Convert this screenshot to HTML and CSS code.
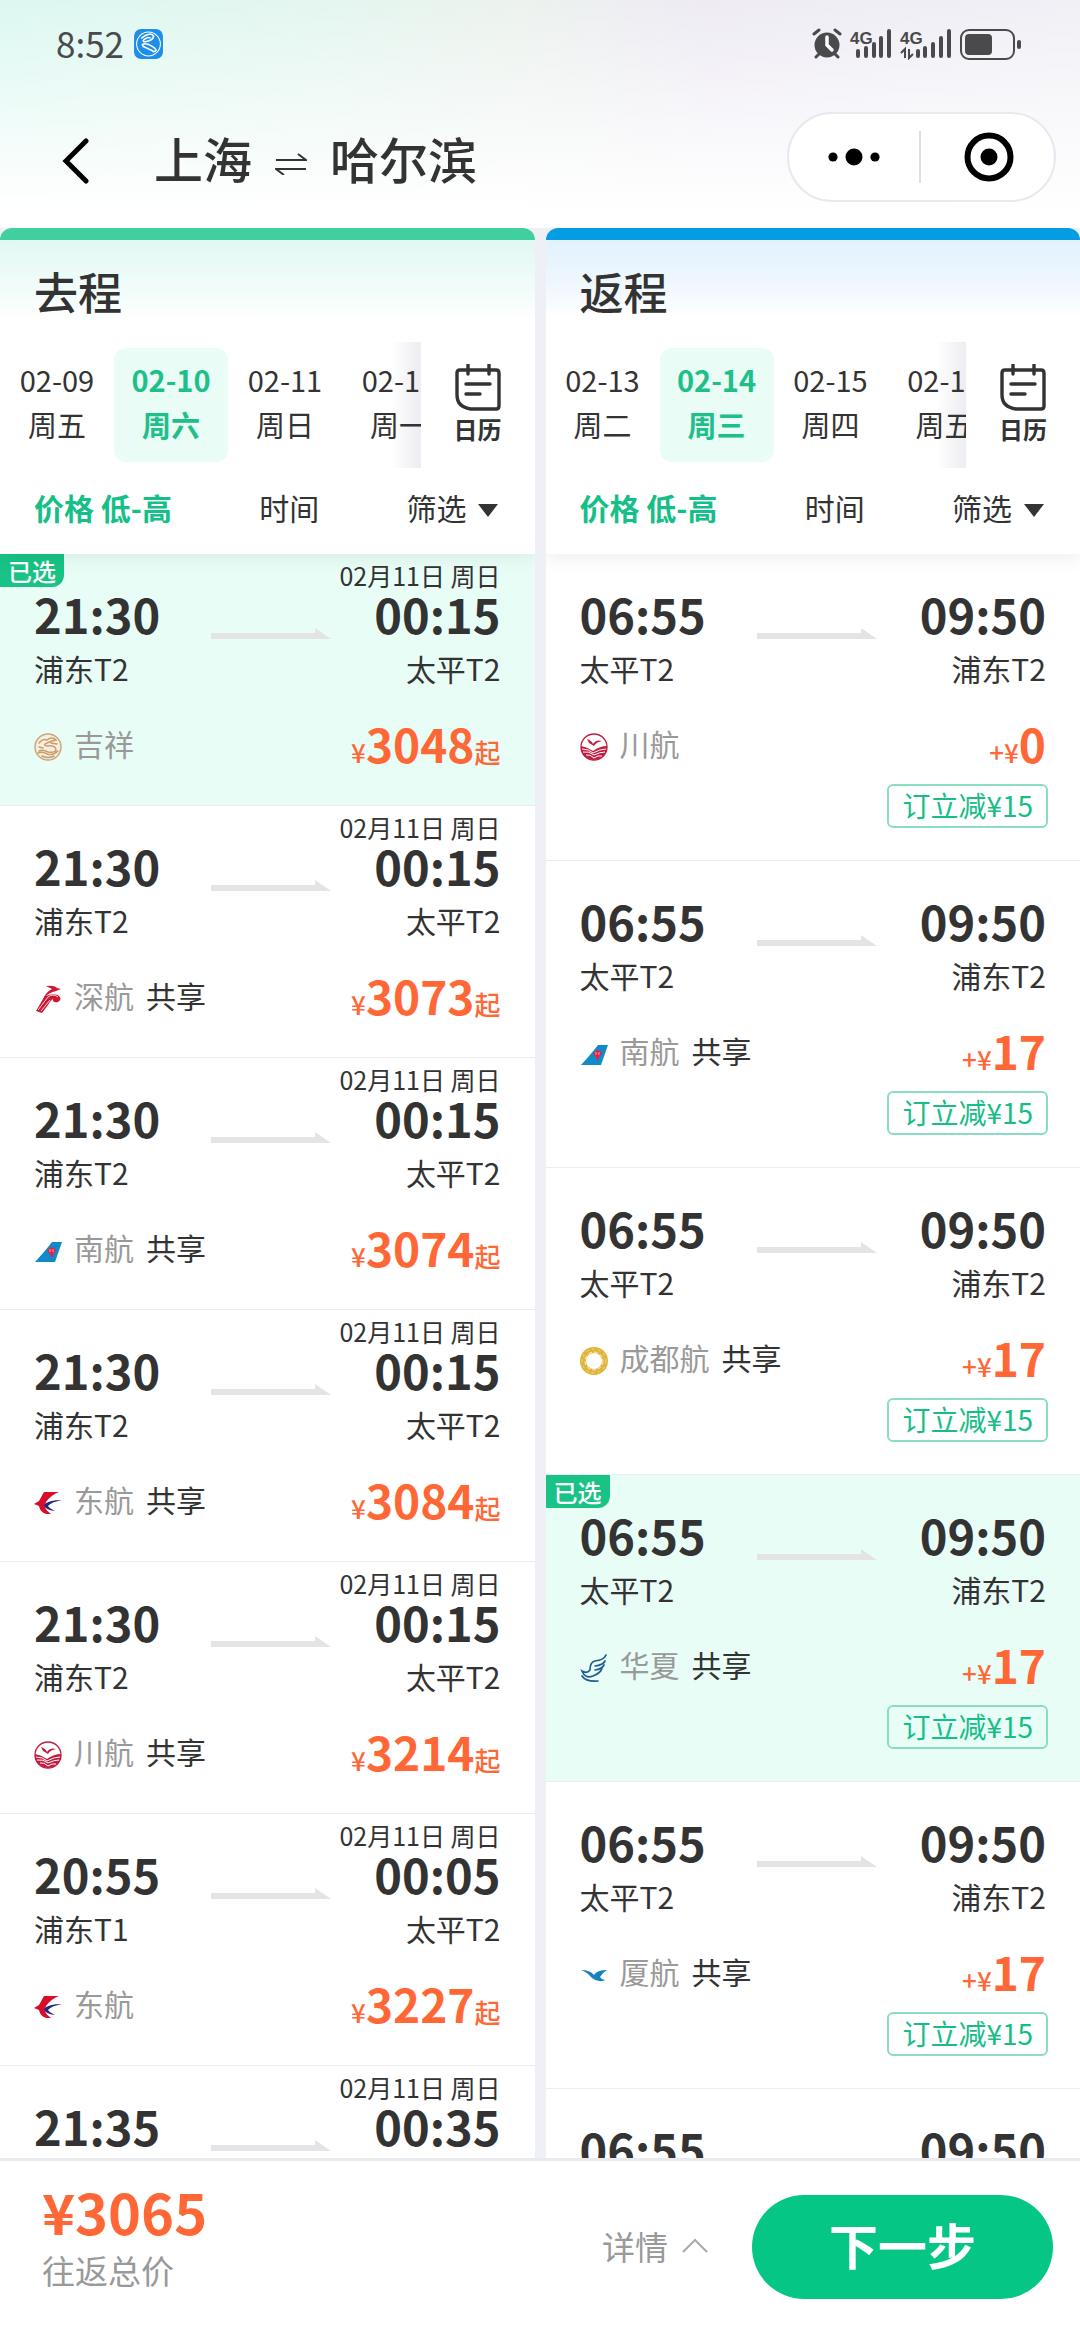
FILE: index.html
```html
<!DOCTYPE html>
<html lang="zh-CN">
<head>
    <meta charset="UTF-8">
    <meta name="viewport" content="width=device-width, initial-scale=1.0">
    <title>上海 - 哈尔滨</title>
    <link rel="stylesheet" href="styles.css">
</head>
<body>
    <!-- shared icons -->
    <svg class="sprite" width="0" height="0" aria-hidden="true">
        <symbol id="arrow" viewBox="0 0 120 11">
            <path d="M0 5H104V0L120 11H0Z" fill="#e4e4e6"/>
        </symbol>
        <symbol id="calendar" viewBox="0 0 46 48">
            <path d="M5 6H41Q44 6 44 9V42Q44 45 41 45H16Q2 43 2 31V9Q2 6 5 6ZM13 1V10M34 1V10M11 20H35M11 30H25" fill="none" stroke="#333" stroke-width="3.4" stroke-linecap="round"/>
        </symbol>
        <symbol id="juneyao" viewBox="0 0 28 28">
            <circle cx="14" cy="14" r="13" fill="#f8eee0" stroke="#c9a77c" stroke-width="1.4"/>
            <path d="M5 10Q9 5 13 7Q18 3 22 7Q17 8 13 10Q8 12 13 13Q22 12 22 17Q21 20 14 19Q9 16 5 18M4 20Q9 18 13 21Q19 23 24 18M8 23Q14 26 20 23M5 14L9 15M17 10L23 11" fill="none" stroke="#c9a06a" stroke-width="1.5" stroke-linecap="round"/>
        </symbol>
        <symbol id="shenzhen" viewBox="0 0 28 28">
            <path d="M12 1Q20 0 23 3L27 4L22 6Q15 8 12 11Q18 8 24 10Q29 14 24 17Q18 18 19 14Q17 15 14 20L8 28L2 26L9 14Q12 7 18 4Z" fill="#cf1733"/>
            <path d="M4 25L14 12Q19 8 24 12M7 26L16 15" fill="none" stroke="#fff" stroke-width=".8"/>
        </symbol>
        <symbol id="southern" viewBox="0 0 28 28">
            <path d="M1 25Q12 13 18 5H28L21 25Z" fill="#118bc7"/>
            <path d="M13 13L15 12L16 10L18 11L20 10L21 12L22 13L21 15L19 17L19 20L17 20L16 17L14 15Z" fill="#e0224c"/>
            <path d="M16 12V15M19 12V15" stroke="#fff" stroke-width=".6"/>
        </symbol>
        <symbol id="eastern" viewBox="0 0 28 28">
            <path d="M10 3H25Q17 6 12 13Q9 20 17 25H12Q6 23 5 17L0 15L5 12Z" fill="#d70e2b"/>
            <path d="M28 11Q14 11 10 16Q11 21 21 22Q15 19 14 17Q17 13 28 11Z" fill="#202a80"/>
        </symbol>
        <symbol id="sichuan" viewBox="0 0 28 28">
            <circle cx="14" cy="14" r="13" fill="#fff" stroke="#c31b3d" stroke-width="1.3"/>
            <path d="M7 6Q12 8 13 11Q16 6 22 8Q16 9 14 13Q11 11 9 10Z" fill="#c31b3d"/>
            <path d="M1 13Q7 14 13 18Q20 13 27 13V18Q23 26 14 27Q5 26 1 18Z" fill="#c31b3d"/>
            <path d="M2 16Q9 16 13 20Q20 16 26 16M3 19Q9 18 14 22Q20 19 25 19M6 22Q10 21 14 25Q18 22 22 23" fill="none" stroke="#fff" stroke-width="1"/>
        </symbol>
        <symbol id="chengdu" viewBox="0 0 28 28">
            <circle cx="14" cy="14" r="11" fill="none" stroke="#e0b33c" stroke-width="6"/>
            <circle cx="14" cy="14" r="9" fill="none" stroke="#fff3c4" stroke-width="1" stroke-dasharray="4 2"/>
            <circle cx="14" cy="14" r="12" fill="none" stroke="#f6d878" stroke-width="1" stroke-dasharray="3 3"/>
        </symbol>
        <symbol id="huaxia" viewBox="0 0 28 28">
            <path d="M26 1Q24 6 15 7Q10 8 10 16Q7 20 2 17Q5 25 13 22Q21 19 22 14M25 7Q23 11 15 12M24 11Q22 15 15 16M2 22Q6 28 18 27" fill="none" stroke="#1d5d91" stroke-width="1.7" stroke-linecap="round"/>
        </symbol>
        <symbol id="xiamen" viewBox="0 0 28 28">
            <path d="M1 9Q10 9 14 14Q17 9 27 9Q22 12 20 16Q22 19 26 19Q18 22 12 17Q7 11 1 9Z" fill="#1583bd"/>
        </symbol>
    </svg>

    <header class="top">
        <div class="status-bar">
            <span class="clock">8:52</span>
            <svg class="app-icon" viewBox="0 0 28 29">
                <rect width="28" height="29" rx="7" fill="#1d8eea"/>
                <circle cx="14" cy="14.500" r="11.500" fill="none" stroke="#fff" stroke-width="1"/>
                <path d="M7 9Q16 2 19 7Q18 11 12 12Q7 13 10 10Q14 7 16 9M8 15Q12 13 18 17Q24 21 19 22Q16 20 9 17Z" fill="none" stroke="#fff" stroke-width="1.500"/>
            </svg>
            <svg class="status-icons" viewBox="0 0 210 32">
                <g fill="#4a4a4c">
                    <circle cx="15" cy="17" r="12.500"/>
                    <path d="M2 6L7 2M28 6L23 2M7 26L4 29M23 26L26 29" stroke="#4a4a4c" stroke-width="3" stroke-linecap="round"/>
                    <path d="M15 9V17L20 22" fill="none" stroke="#fff" stroke-width="3.500" stroke-linecap="round"/>
                    <text class="net" x="38" y="16">4G</text>
                    <text class="net" x="88" y="16">4G</text>
                    <path d="M46 23V28M54 20V28M62 16V28M69 10V28M77 3V28M106 23V28M113 20V28M121 16V28M129 10V28M137 3V28" stroke="#4a4a4c" stroke-width="4" stroke-linecap="round"/>
                    <path d="M89 25L93 21V30M97 21V30L101 26" fill="none" stroke="#4a4a4c" stroke-width="2"/>
                    <rect x="149" y="2" width="53" height="29" rx="8" fill="none" stroke="#4a4a4c" stroke-width="2"/>
                    <rect x="153" y="6" width="27" height="21" rx="4"/>
                    <rect x="205" y="12" width="4" height="9" rx="2"/>
                </g>
            </svg>
        </div>
        <div class="nav-bar">
            <button class="back" aria-label="返回">
                <svg width="28" height="46" viewBox="0 0 28 46"><path d="M24 3L4 23L24 43" fill="none" stroke="#000" stroke-width="5" stroke-linecap="round"/></svg>
            </button>
            <h1 class="route-title">
                <span>上海</span>
                <svg width="32" height="22" viewBox="0 0 32 22"><path d="M1 7H31L23 1M31 16H1L9 22" fill="none" stroke="#333" stroke-width="2"/></svg>
                <span>哈尔滨</span>
            </h1>
            <div class="capsule">
                <button aria-label="更多">
                    <svg width="54" height="20" viewBox="0 0 54 20"><circle cx="6" cy="10" r="4.600"/><circle cx="27" cy="10" r="8.500"/><circle cx="48" cy="10" r="4.600"/></svg>
                </button>
                <button aria-label="关闭">
                    <svg width="50" height="50" viewBox="0 0 50 50"><circle cx="25" cy="25" r="21.500" fill="none" stroke="#000" stroke-width="6"/><circle cx="25" cy="25" r="8.500"/></svg>
                </button>
            </div>
        </div>
    </header>

    <main class="trips">
        <section class="panel panel-go">
            <div class="panel-head">
                <h2>去程</h2>
                <div class="date-bar">
                    <div class="dates">
                        <button class="date">02-09<span>周五</span></button>
                        <button class="date active">02-10<span>周六</span></button>
                        <button class="date">02-11<span>周日</span></button>
                        <button class="date">02-12<span>周一</span></button>
                    </div>
                    <button class="calendar"><svg><use href="#calendar"/></svg>日历</button>
                </div>
                <div class="sort-bar">
                    <button class="active">价格 低-高</button>
                    <button>时间</button>
                    <button>筛选<i class="caret"></i></button>
                </div>
            </div>
            <ul class="flights">
                <li class="flight selected">
                    <span class="badge">已选</span>
                    <div class="route">
                        <div class="stop"><b>21:30</b><span>浦东T2</span></div>
                        <svg class="arrow"><use href="#arrow"/></svg>
                        <div class="stop end"><small>02月11日 周日</small><b>00:15</b><span>太平T2</span></div>
                    </div>
                    <div class="info">
                        <svg class="logo"><use href="#juneyao"/></svg><span class="airline">吉祥</span>
                        <span class="price">¥<b>3048</b>起</span>
                    </div>
                </li>
                <li class="flight">
                    <div class="route">
                        <div class="stop"><b>21:30</b><span>浦东T2</span></div>
                        <svg class="arrow"><use href="#arrow"/></svg>
                        <div class="stop end"><small>02月11日 周日</small><b>00:15</b><span>太平T2</span></div>
                    </div>
                    <div class="info">
                        <svg class="logo"><use href="#shenzhen"/></svg><span class="airline">深航</span><span>共享</span>
                        <span class="price">¥<b>3073</b>起</span>
                    </div>
                </li>
                <li class="flight">
                    <div class="route">
                        <div class="stop"><b>21:30</b><span>浦东T2</span></div>
                        <svg class="arrow"><use href="#arrow"/></svg>
                        <div class="stop end"><small>02月11日 周日</small><b>00:15</b><span>太平T2</span></div>
                    </div>
                    <div class="info">
                        <svg class="logo"><use href="#southern"/></svg><span class="airline">南航</span><span>共享</span>
                        <span class="price">¥<b>3074</b>起</span>
                    </div>
                </li>
                <li class="flight">
                    <div class="route">
                        <div class="stop"><b>21:30</b><span>浦东T2</span></div>
                        <svg class="arrow"><use href="#arrow"/></svg>
                        <div class="stop end"><small>02月11日 周日</small><b>00:15</b><span>太平T2</span></div>
                    </div>
                    <div class="info">
                        <svg class="logo"><use href="#eastern"/></svg><span class="airline">东航</span><span>共享</span>
                        <span class="price">¥<b>3084</b>起</span>
                    </div>
                </li>
                <li class="flight">
                    <div class="route">
                        <div class="stop"><b>21:30</b><span>浦东T2</span></div>
                        <svg class="arrow"><use href="#arrow"/></svg>
                        <div class="stop end"><small>02月11日 周日</small><b>00:15</b><span>太平T2</span></div>
                    </div>
                    <div class="info">
                        <svg class="logo"><use href="#sichuan"/></svg><span class="airline">川航</span><span>共享</span>
                        <span class="price">¥<b>3214</b>起</span>
                    </div>
                </li>
                <li class="flight">
                    <div class="route">
                        <div class="stop"><b>20:55</b><span>浦东T1</span></div>
                        <svg class="arrow"><use href="#arrow"/></svg>
                        <div class="stop end"><small>02月11日 周日</small><b>00:05</b><span>太平T2</span></div>
                    </div>
                    <div class="info">
                        <svg class="logo"><use href="#eastern"/></svg><span class="airline">东航</span>
                        <span class="price">¥<b>3227</b>起</span>
                    </div>
                </li>
                <li class="flight">
                    <div class="route">
                        <div class="stop"><b>21:35</b></div>
                        <svg class="arrow"><use href="#arrow"/></svg>
                        <div class="stop end"><small>02月11日 周日</small><b>00:35</b></div>
                    </div>
                </li>
            </ul>
        </section>

        <section class="panel panel-back">
            <div class="panel-head">
                <h2>返程</h2>
                <div class="date-bar">
                    <div class="dates">
                        <button class="date">02-13<span>周二</span></button>
                        <button class="date active">02-14<span>周三</span></button>
                        <button class="date">02-15<span>周四</span></button>
                        <button class="date">02-16<span>周五</span></button>
                    </div>
                    <button class="calendar"><svg><use href="#calendar"/></svg>日历</button>
                </div>
                <div class="sort-bar">
                    <button class="active">价格 低-高</button>
                    <button>时间</button>
                    <button>筛选<i class="caret"></i></button>
                </div>
            </div>
            <ul class="flights">
                <li class="flight">
                    <div class="route">
                        <div class="stop"><b>06:55</b><span>太平T2</span></div>
                        <svg class="arrow"><use href="#arrow"/></svg>
                        <div class="stop end"><b>09:50</b><span>浦东T2</span></div>
                    </div>
                    <div class="info">
                        <svg class="logo"><use href="#sichuan"/></svg><span class="airline">川航</span>
                        <span class="price">+¥<b>0</b></span>
                    </div>
                    <div class="discount">订立减¥15</div>
                </li>
                <li class="flight">
                    <div class="route">
                        <div class="stop"><b>06:55</b><span>太平T2</span></div>
                        <svg class="arrow"><use href="#arrow"/></svg>
                        <div class="stop end"><b>09:50</b><span>浦东T2</span></div>
                    </div>
                    <div class="info">
                        <svg class="logo"><use href="#southern"/></svg><span class="airline">南航</span><span>共享</span>
                        <span class="price">+¥<b>17</b></span>
                    </div>
                    <div class="discount">订立减¥15</div>
                </li>
                <li class="flight">
                    <div class="route">
                        <div class="stop"><b>06:55</b><span>太平T2</span></div>
                        <svg class="arrow"><use href="#arrow"/></svg>
                        <div class="stop end"><b>09:50</b><span>浦东T2</span></div>
                    </div>
                    <div class="info">
                        <svg class="logo"><use href="#chengdu"/></svg><span class="airline">成都航</span><span>共享</span>
                        <span class="price">+¥<b>17</b></span>
                    </div>
                    <div class="discount">订立减¥15</div>
                </li>
                <li class="flight selected">
                    <span class="badge">已选</span>
                    <div class="route">
                        <div class="stop"><b>06:55</b><span>太平T2</span></div>
                        <svg class="arrow"><use href="#arrow"/></svg>
                        <div class="stop end"><b>09:50</b><span>浦东T2</span></div>
                    </div>
                    <div class="info">
                        <svg class="logo"><use href="#huaxia"/></svg><span class="airline">华夏</span><span>共享</span>
                        <span class="price">+¥<b>17</b></span>
                    </div>
                    <div class="discount">订立减¥15</div>
                </li>
                <li class="flight">
                    <div class="route">
                        <div class="stop"><b>06:55</b><span>太平T2</span></div>
                        <svg class="arrow"><use href="#arrow"/></svg>
                        <div class="stop end"><b>09:50</b><span>浦东T2</span></div>
                    </div>
                    <div class="info">
                        <svg class="logo"><use href="#xiamen"/></svg><span class="airline">厦航</span><span>共享</span>
                        <span class="price">+¥<b>17</b></span>
                    </div>
                    <div class="discount">订立减¥15</div>
                </li>
                <li class="flight">
                    <div class="route">
                        <div class="stop"><b>06:55</b></div>
                        <div class="stop end"><b>09:50</b></div>
                    </div>
                </li>
            </ul>
        </section>
    </main>

    <footer class="bottom-bar">
        <div class="total">
            <b>¥3065</b>
            <span>往返总价</span>
        </div>
        <button class="detail">详情
            <svg width="26" height="16" viewBox="0 0 26 16"><path d="M1 14L13 2L25 14" fill="none" stroke="#aaa" stroke-width="2"/></svg>
        </button>
        <button class="next">下一步</button>
    </footer>
</body>
</html>
```
FILE: styles.css
```css
* {
    box-sizing: border-box;
    margin: 0;
    padding: 0;
}
body {
    display: flex;
    flex-direction: column;
    height: 100vh;
    overflow: hidden;
    font-family: "Noto Sans CJK SC", sans-serif;
    font-size: 30px;
    color: #333;
    background: #fff;
}
button {
    font: inherit;
    color: inherit;
    background: none;
    border: none;
    cursor: pointer;
}
ul {
    list-style: none;
}
svg {
    flex: none;
}
.sprite {
    position: absolute;
}

/* header */
.top {
    flex: none;
    background:
        linear-gradient(to bottom, rgba(255, 255, 255, 0) 0, #fff 210px),
        linear-gradient(to right, #dcf8f1 0%, #e4f6ef 30%, #ecf2ee 48%, #eeebf4 65%, #f1f0f6 100%);
}
.status-bar {
    display: flex;
    align-items: center;
    height: 88px;
    padding: 0 58px 0 56px;
}
.clock {
    font-size: 35px;
    line-height: 84px;
    padding-bottom: 2px;
    color: #4a4a4c;
}
.app-icon {
    width: 29px;
    height: 30px;
    margin-left: 10px;
}
.status-icons {
    width: 210px;
    height: 32px;
    margin-left: auto;
}
.net {
    font-family: "Liberation Sans", sans-serif;
    font-size: 17px;
    font-weight: bold;
}
.nav-bar {
    display: flex;
    align-items: center;
    height: 140px;
    padding: 0 24px 0 62px;
}
.back {
    display: flex;
    padding-top: 6px;
}
.route-title {
    display: flex;
    align-items: center;
    gap: 23px;
    margin-left: 64px;
    font-size: 49px;
    line-height: 70px;
    font-weight: 500;
}
.route-title svg {
    margin-top: 12px;
}
.capsule {
    display: flex;
    align-items: center;
    width: 269px;
    height: 90px;
    margin: 0 0 2px auto;
    border: 2px solid #e8e8ee;
    border-radius: 45px;
    background: #fff;
}
.capsule button {
    flex: 1;
    display: flex;
    align-items: center;
    justify-content: center;
    height: 52px;
}
.capsule button + button {
    padding-left: 4px;
    border-left: 2px solid #dedee4;
}

/* two columns */
.trips {
    flex: 1;
    min-height: 0;
    display: grid;
    grid-template-columns: 1fr 1fr;
    gap: 11px;
    background: #efeff6;
}
.panel {
    display: flex;
    flex-direction: column;
    min-width: 0;
    min-height: 0;
    overflow: hidden;
    border-radius: 12px 12px 0 0;
    background: #fff;
}
.panel-head {
    position: relative;
    z-index: 1;
    flex: none;
    background: #fff;
    box-shadow: 0 4px 18px rgba(0, 0, 0, 0.07);
}
.panel-go .panel-head {
    border-top: 12px solid #40d09f;
}
.panel-back .panel-head {
    border-top: 12px solid #049de4;
}
.panel h2 {
    padding-left: 34px;
    font-size: 44px;
    line-height: 102px;
    font-weight: 500;
}
.panel-go h2 {
    background: linear-gradient(#e2f8f2, #f4fdfb 55%, #fff 80%);
}
.panel-back h2 {
    background: linear-gradient(#e1f2fd, #f2f8fe 50%, #fff 75%);
}
.date-bar {
    display: flex;
    height: 126px;
}
.dates {
    flex: 1;
    min-width: 0;
    display: flex;
    padding: 6px 0;
    overflow: hidden;
    background: linear-gradient(to left, #ededf2, #fff 30px);
}
.date {
    flex: 0 0 114px;
    padding-bottom: 6px;
    border-radius: 12px;
    font-size: 29px;
    line-height: 45px;
}
.date span {
    display: block;
}
.date.active {
    color: #20bf8a;
    font-weight: bold;
    background: #e9fcf6;
}
.calendar {
    flex: 0 0 114px;
    display: flex;
    flex-direction: column;
    align-items: center;
    padding-top: 22px;
    font-size: 24px;
    line-height: 34px;
    font-weight: bold;
}
.calendar svg {
    width: 46px;
    height: 48px;
}
.sort-bar {
    display: flex;
    justify-content: space-between;
    align-items: center;
    height: 86px;
    padding: 0 36px 8px 34px;
}
.sort-bar button {
    display: flex;
    align-items: center;
    font-size: 30px;
    line-height: 44px;
}
.sort-bar .active {
    color: #16bf88;
    font-weight: bold;
}
.caret {
    margin: 6px 0 0 12px;
    border: 10px solid transparent;
    border-top: 13px solid #333;
    border-bottom: 0;
}

/* flight list */
.flights {
    flex: 1;
    min-height: 0;
    overflow: hidden;
}
.flight {
    position: relative;
    padding: 7px 34px 40px;
    border-bottom: 1px solid #ececef;
}
.panel-back .flight {
    padding-bottom: 32px;
}
.flight.selected {
    background: #e9fdf7;
}
.badge {
    position: absolute;
    left: 0;
    top: 0;
    padding: 0 8px;
    border-radius: 0 0 12px 0;
    font-size: 24px;
    line-height: 33px;
    font-weight: 500;
    color: #fff;
    background: #18c385;
}
.route {
    display: grid;
    grid-template-columns: 1fr auto 1fr;
}
.arrow {
    width: 120px;
    height: 11px;
    margin: 67px 0 0 8px;
}
.stop {
    display: flex;
    flex-direction: column;
    justify-content: flex-end;
    padding-top: 28px;
    white-space: nowrap;
}
.stop.end {
    grid-column: 3;
    align-items: flex-end;
}
.stop small {
    margin-top: -28px;
    font-size: 25px;
    line-height: 28px;
}
.stop b {
    font-size: 47px;
    line-height: 50px;
}
.stop span {
    margin-top: 9px;
    font-size: 30px;
    line-height: 40px;
}
.info {
    display: flex;
    align-items: center;
    gap: 12px;
    height: 44px;
    margin-top: 33px;
    line-height: 44px;
}
.logo {
    width: 28px;
    height: 28px;
    margin-top: 8px;
}
.airline {
    color: #999;
}
.price {
    margin: 8px 0 0 auto;
    font-size: 26px;
    font-weight: 500;
    color: #ff6737;
}
.price b {
    font-size: 46px;
}
.discount {
    width: fit-content;
    margin: 19px -2px 0 auto;
    padding: 0 13px 2px;
    border: 2px solid #8bdcc4;
    border-radius: 6px;
    font-size: 28px;
    line-height: 38px;
    color: #16bd87;
}

/* total price bar */
.bottom-bar {
    flex: none;
    display: flex;
    align-items: center;
    height: 173px;
    padding: 0 27px 0 42px;
    border-top: 3px solid #e9e9f0;
    background: #fff;
}
.total {
    padding-bottom: 14px;
}
.total b {
    display: block;
    font-size: 56px;
    line-height: 62px;
    color: #ff6737;
}
.total span {
    display: block;
    font-size: 33px;
    line-height: 56px;
    color: #999;
}
.detail {
    display: flex;
    align-items: center;
    gap: 14px;
    margin: 0 44px 0 auto;
    font-size: 33px;
    color: #999;
}
.next {
    width: 301px;
    height: 104px;
    margin-top: 2px;
    padding-bottom: 8px;
    border-radius: 52px;
    font-size: 49px;
    font-weight: bold;
    color: #fff;
    background: #06c686;
}
```
